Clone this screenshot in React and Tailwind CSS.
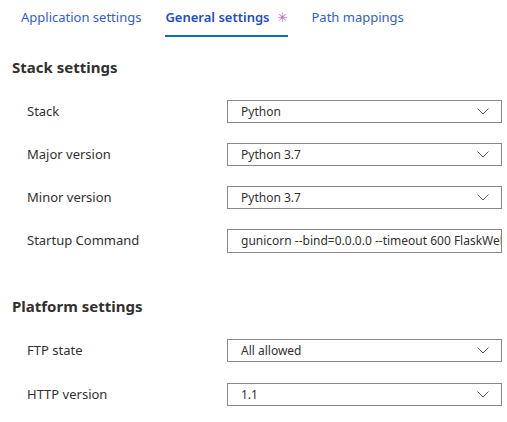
import React from 'react';

const FONT = { fontFamily: '"Segoe UI", "Noto Sans", "Liberation Sans", sans-serif' };

function Chevron() {
  return (
    <svg width="12" height="7" viewBox="0 0 12 7" fill="none" className="shrink-0">
      <path d="M0.5 0.5 L6 6 L11.5 0.5" stroke="#605e5c" strokeWidth="1" />
    </svg>
  );
}

function Dropdown({ value }) {
  return (
    <div className="flex items-center justify-between w-[275px] h-[23px] border border-[#8a8886] bg-white pl-[13px] pr-[12px]">
      <span className="text-[12px] text-[#323130] leading-none">{value}</span>
      <Chevron />
    </div>
  );
}

function TextBox({ value }) {
  return (
    <div className="flex items-center w-[275px] h-[24px] border border-[#8a8886] bg-white pl-[13px] pr-[3px] overflow-hidden">
      <span className="text-[12px] text-[#323130] leading-none whitespace-nowrap">{value}</span>
    </div>
  );
}

function Row({ label, children }) {
  return (
    <div className="flex items-center">
      <div className="w-[227px] shrink-0 pl-[27px] text-[13px] text-[#323130]">{label}</div>
      {children}
    </div>
  );
}

export default function App() {
  return (
    <div className="w-[507px] h-[422px] bg-white overflow-hidden" style={FONT}>
      {/* Tabs */}
      <div className="flex h-[37px] pl-[21px] gap-[24px] text-[13px] text-[#2f5fd0]">
        <div className="flex items-center h-full border-b-2 border-transparent">Application settings</div>
        <div className="flex items-center h-full border-b-2 border-[#0f6cbd] font-semibold text-[#1d4fc4]">
          General settings<span className="ml-[7px] font-normal text-[#c45bd0]">✳</span>
        </div>
        <div className="flex items-center h-full border-b-2 border-transparent">Path mappings</div>
      </div>

      <div className="pl-[12px] pt-[20px] text-[15px] font-bold text-[#323130] leading-[20px]">Stack settings</div>

      <div className="flex flex-col gap-[20px] mt-[23px]">
        <Row label="Stack"><Dropdown value="Python" /></Row>
        <Row label="Major version"><Dropdown value="Python 3.7" /></Row>
        <Row label="Minor version"><Dropdown value="Python 3.7" /></Row>
        <Row label="Startup Command"><TextBox value="gunicorn --bind=0.0.0.0 --timeout 600 FlaskWebProject" /></Row>
      </div>

      <div className="pl-[12px] pt-[43px] text-[15px] font-bold text-[#323130] leading-[20px]">Platform settings</div>

      <div className="flex flex-col gap-[21px] mt-[23px]">
        <Row label="FTP state"><Dropdown value="All allowed" /></Row>
        <Row label="HTTP version"><Dropdown value="1.1" /></Row>
      </div>
    </div>
  );
}
